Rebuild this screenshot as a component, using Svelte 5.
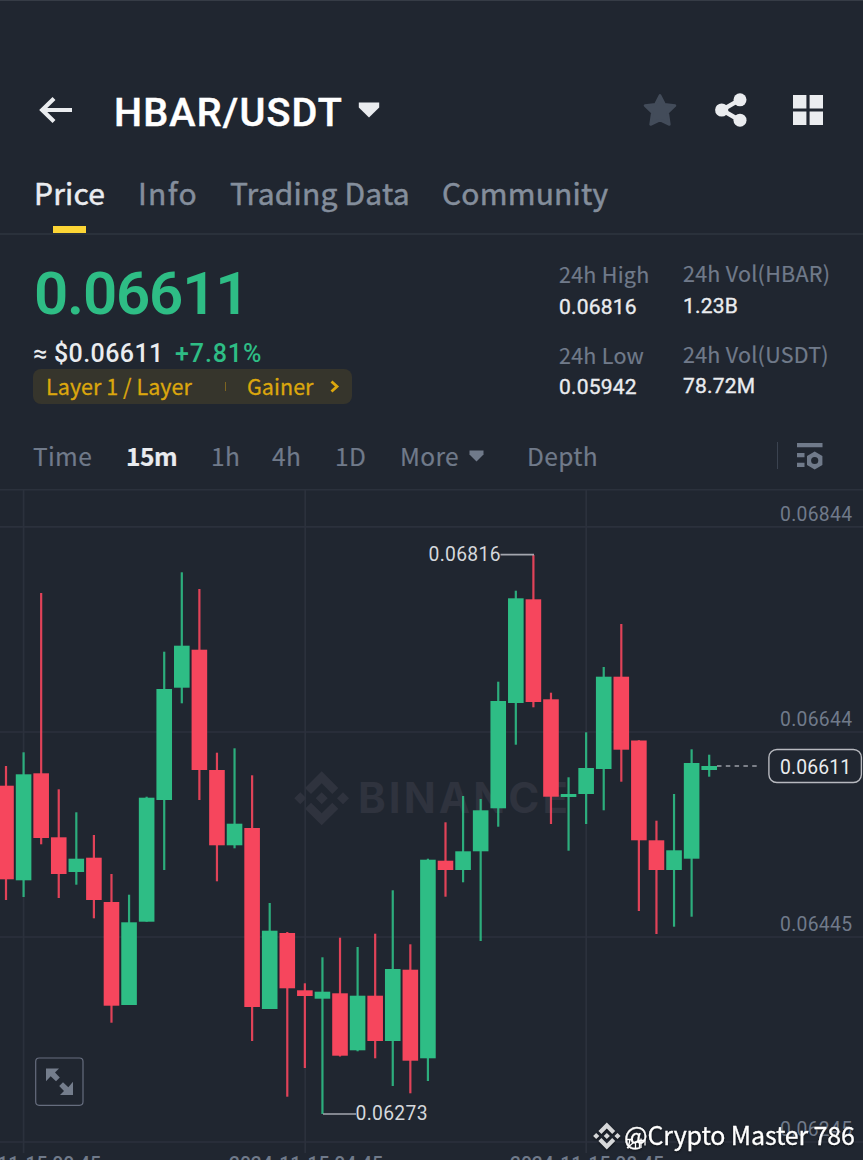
<script>
  const tabs = [
    { label: 'Price', cls: 'price', active: true },
    { label: 'Info', cls: 'info' },
    { label: 'Trading Data', cls: 'trading' },
    { label: 'Community', cls: 'community' }
  ];

  const PITCH = 17.58;
  const FIRST = 6;
  const BODY = 15.6;

  // direction, high, body top, body bottom, low (chart units)
  const candles = [
    ['r', 766, 785.7, 879.3, 900],
    ['g', 752.3, 774.3, 880.3, 897],
    ['r', 593, 773.3, 838, 844.3],
    ['r', 789.3, 837.3, 874, 898],
    ['g', 812.3, 858.7, 872, 884.7],
    ['r', 835, 857.7, 900, 918.3],
    ['r', 874, 902, 1005.7, 1022.7],
    ['g', 894.7, 922.3, 1005, 1005],
    ['g', 796.7, 797.7, 921.7, 921.7],
    ['g', 651.7, 689, 800, 870],
    ['g', 572.3, 645.7, 687.7, 703.3],
    ['r', 589, 649.7, 770, 800],
    ['r', 752.7, 770, 845.3, 881.3],
    ['g', 748.3, 823.7, 845.3, 848.3],
    ['r', 775.3, 828, 1007, 1041],
    ['g', 903, 930.7, 1009, 1009],
    ['r', 932, 933, 988.3, 1096.7],
    ['r', 983.3, 990.3, 996, 1068],
    ['g', 957.3, 991.7, 998.7, 1114],
    ['r', 937.7, 993.3, 1055.7, 1056.5],
    ['g', 947, 995.7, 1050.3, 1051.3],
    ['r', 933.7, 995.7, 1041, 1058.3],
    ['g', 890.3, 969, 1041, 1086],
    ['r', 944.3, 969.7, 1060.7, 1093.3],
    ['g', 858.7, 859.7, 1058.3, 1081],
    ['r', 822.3, 860.7, 870, 896.7],
    ['g', 796, 851.3, 870, 882.3],
    ['g', 799, 810.3, 851.3, 941],
    ['g', 681.7, 701, 808.3, 826.7],
    ['g', 590.7, 598.3, 703, 744.7],
    ['r', 555, 599.3, 702, 707.3],
    ['r', 692.7, 699.3, 796.7, 824],
    ['g', 777.3, 794, 797, 850.7],
    ['g', 732.3, 768, 794, 824],
    ['g', 667, 676.7, 769, 810.3],
    ['r', 624, 676.7, 749.7, 781.7],
    ['r', 740.2, 740.5, 840.3, 911],
    ['r', 820.7, 840.3, 870, 934],
    ['g', 794, 850.3, 870, 926.7],
    ['g', 749.3, 763, 858.7, 916.7],
    ['g', 754.7, 766, 770, 776.7]
  ].map(([dir, high, top, bottom, low], i) => ({ dir, high, top, bottom, low, x: FIRST + i * PITCH }));

  const hLines = [489.7, 526.8, 732, 937, 1142];
  const vLines = [23.6, 305.2, 586.2];
  const axis = [
    ['0.06844', 520.5],
    ['0.06644', 726],
    ['0.06445', 930.7],
    ['0.06245', 1136]
  ];
  const dates = [
    ['2024-11-15 00:45', -53],
    ['2024-11-15 04:45', 229],
    ['2024-11-15 08:45', 510]
  ];
</script>

<div class="screen">
  <header>
    <svg class="back" viewBox="0 0 34 28" width="34" height="28">
      <path d="M15 2.500 3.200 14 15 25.500M4 14h29" fill="none" stroke="#eaecef" stroke-width="4.200" />
    </svg>
    <h1>HBAR/USDT</h1>
    <svg class="caret" viewBox="0 0 22 16" width="22" height="16">
      <path d="M.8.500h20.400v5L11 15.500.8 5.500z" fill="#eaecef" />
    </svg>
    <svg class="star" viewBox="0 0 34 34" width="34" height="34">
      <path d="M17 2.300 21.500 11.200l10.500 1.400-7.300 7 1.700 11.900L17 27l-9.400 4.500 1.700-11.900-7.300-7L12.500 11.200z" fill="#434c5a" stroke="#434c5a" stroke-width="2.600" stroke-linejoin="round" />
    </svg>
    <svg class="share" viewBox="0 0 32 34" width="32" height="34">
      <path d="M25 6.700 7 17l18 10.500" fill="none" stroke="#eaecef" stroke-width="4.400" />
      <circle cx="25" cy="6.800" r="6.500" fill="#eaecef" />
      <circle cx="6.700" cy="17" r="6.600" fill="#eaecef" />
      <circle cx="25" cy="27.200" r="6.500" fill="#eaecef" />
    </svg>
    <svg class="grid" viewBox="0 0 30 30" width="30" height="30">
      <path d="M0 0h13.400v13.400H0zM16.600 0H30v13.400H16.600zM0 16.600h13.400V30H0zM16.600 16.600H30V30H16.600z" fill="#eaecef" />
    </svg>
  </header>

  <nav class="tabs">
    {#each tabs as tab}
      <span class="tab {tab.cls}" class:active={tab.active}>{tab.label}</span>
    {/each}
  </nav>

  <section class="ticker">
    <div class="quote">
      <div class="last">0.06611</div>
      <div class="fiat"><span class="approx">≈</span><span class="usd">$0.06611</span><span class="change">+7.81%</span></div>
      <div class="tag">
        <span class="layer">Layer 1 / Layer</span>
        <i></i>
        <span class="gainer">Gainer</span>
        <svg viewBox="0 0 10 13" width="10" height="13"><path d="M1.500 1.500 7 6.500l-5.500 5" fill="none" stroke="#dca70d" stroke-width="2.800" /></svg>
      </div>
    </div>
    <dl class="left">
      <dt>24h High</dt><dd>0.06816</dd>
      <dt>24h Low</dt><dd>0.05942</dd>
    </dl>
    <dl class="right">
      <dt>24h Vol(HBAR)</dt><dd>1.23B</dd>
      <dt>24h Vol(USDT)</dt><dd>78.72M</dd>
    </dl>
  </section>

  <nav class="intervals">
    <span class="time">Time</span>
    <span class="m15">15m</span>
    <span class="h1">1h</span>
    <span class="h4">4h</span>
    <span class="d1">1D</span>
    <span class="more">More</span>
    <svg class="more-caret" viewBox="0 0 15 12" width="15" height="12"><path d="M.5.500h14v4L7.500 11.500.5 4.500z" fill="#707a8a" /></svg>
    <span class="depth">Depth</span>
    <i></i>
    <svg class="settings" viewBox="0 0 26 28" width="26" height="28">
      <path d="M0 1h25.500v4.200H0zM0 11h7.500v4.200H0zM0 20.800h7.500V25H0z" fill="#707a8a" />
      <path fill-rule="evenodd" d="M17.700 9.500 25.400 14v9l-7.700 4.500L10 23v-9zM17.700 14.900a3.600 3.600 0 1 0 0 7.200 3.600 3.600 0 0 0 0-7.200z" fill="#707a8a" />
    </svg>
  </nav>

  <svg class="chart" viewBox="0 489 863 671" width="863" height="671">
    <g stroke="#2b313c" stroke-width="1.700">
      {#each hLines as y}<path d="M0 {y}H863" />{/each}
      {#each vLines as x}<path d="M{x} 490V1153" />{/each}
    </g>

    <g fill="#2f333e">
      <path d="M321.700 771.300 338.300 788l-6 6-10.600-10.700L311 794l-6-6zM321.700 825.300 305 808.700l6-6 10.700 10.600 10.600-10.600 6 6zM321.700 792.300l6 6-6 6-6-6zM300.300 792.300l6 6-6 6-6-6zM343 792.300l6 6-6 6-6-6z" />
      <text class="brand" x="358" y="813" textLength="210">BINANCE</text>
    </g>

    {#each candles as c}
      <g class={c.dir}>
        <rect class="wick" x={c.x - 1.1} y={c.high} width="2.2" height={c.low - c.high} />
        <rect x={c.x - BODY / 2} y={c.top} width={BODY} height={c.bottom - c.top} />
      </g>
    {/each}

    <path d="M500.500 554.700h33.500M323 1114h33" stroke="#a3a6ae" stroke-width="1.700" />
    <text class="mark" x="428.500" y="560.500" textLength="72">0.06816</text>
    <text class="mark" x="355.500" y="1120" textLength="72">0.06273</text>
    <path d="M717 766h41" stroke="#9a9ea7" stroke-width="1.500" stroke-dasharray="4.500 4.300" />

    {#each axis as [value, y]}<text class="axis" x="780" {y} textLength="72">{value}</text>{/each}
    {#each dates as [value, x]}<text class="date" {x} y="1171" textLength="154">{value}</text>{/each}

    <rect x="768.900" y="749.500" width="92.500" height="33" rx="8" fill="#202630" stroke="#b7b9bf" stroke-width="1.400" />
    <text class="current" x="780" y="774" textLength="71">0.06611</text>

    <g>
      <rect x="35.700" y="1058" width="47.300" height="47.300" rx="3.500" fill="none" stroke="#666d7e" stroke-width="1.200" />
      <path d="M46 1068.500h13l-4 4 4.800 5-3.800 3.800-5.300-5-4.700 5zM73 1095H60l4-4-4.800-5 3.800-3.800 5.300 5 4.700-5.500z" fill="#747d8c" />
    </g>

    <g class="signature">
      <path fill="#d6d7d9" d="M606.800 1122.500 615.200 1131l-3 3-5.400-5.400-5.400 5.400-3-3zM606.800 1149.500 598.400 1141l3-3 5.400 5.400 5.400-5.400 3 3zM606.800 1132.900l3.100 3.100-3.100 3.100-3.100-3.100zM596.200 1132.900l3.100 3.100-3.100 3.100-3.100-3.100zM617.500 1132.900l3.100 3.100-3.100 3.100-3.100-3.100z" />
      <text x="624" y="1145" textLength="231">@Crypto Master 786</text>
      <path class="flourish" d="M627 1139.500h6M630 1139.500l-2 9M627 1148l6-5M635.500 1141.500v7M635.500 1142h4v5M641 1138.500v9.500M638.500 1140.500h6.500v5" />
    </g>
  </svg>
</div>

<style>
  :global(body) {
    margin: 0;
    background: #202630;
  }
  .screen {
    box-sizing: border-box;
    width: 863px;
    height: 1160px;
    overflow: hidden;
    border-top: 1px solid #363c46;
    background: #202630;
    color: #eaecef;
    font-family: "Noto Sans CJK SC", sans-serif;
    white-space: nowrap;
  }
  svg {
    display: block;
    flex: none;
  }

  header {
    display: flex;
    align-items: center;
    height: 70px;
    padding: 74px 39px 0;
  }
  h1 {
    margin: 0 16px 0 41px;
    padding-top: 5px;
    width: 228px;
    font: 500 39.500px/60px Roboto, sans-serif;
    letter-spacing: 1.200px;
    color: #fff;
    -webkit-text-stroke: 0.500px #fff;
  }
  .star {
    margin-left: auto;
  }
  .share {
    margin-left: 38px;
  }
  .grid {
    margin: 0 1px 0 46px;
  }

  .tabs {
    box-sizing: border-box;
    display: flex;
    height: 90px;
    padding: 20px 34px 0;
    border-bottom: 2px solid #2a313b;
    color: #848e9c;
    font-size: 30px;
    line-height: 54px;
    letter-spacing: 0.200px;
    -webkit-text-stroke: 0.500px currentColor;
  }
  .tab {
    display: flex;
    flex-direction: column;
    box-sizing: border-box;
    flex: none;
  }
  .active {
    color: #eaecef;
  }
  .active::after {
    content: "";
    width: 33px;
    height: 7px;
    margin: 7px 0 0 19px;
    background: #fcd535;
  }
  .price { width: 104px; }
  .info { width: 92px; letter-spacing: 1.300px; }
  .trading { width: 212px; }

  .ticker {
    display: flex;
    height: 184px;
    padding-left: 33px;
  }
  .quote {
    width: 526px;
  }
  .last {
    padding-top: 24px;
    padding-left: 1px;
    color: #2ebd85;
    font: 600 60px/70px Roboto, sans-serif;
    letter-spacing: -1.200px;
  }
  .fiat {
    display: flex;
    height: 30px;
    margin-top: 10px;
    font: 500 25px/30px Roboto, sans-serif;
    letter-spacing: 0.400px;
  }
  .approx { width: 21px; }
  .usd { width: 121px; }
  .change { color: #2ebd85; letter-spacing: 0.900px; }
  .tag {
    box-sizing: border-box;
    display: flex;
    align-items: center;
    width: 319px;
    height: 35px;
    margin-top: 0;
    padding-left: 13px;
    border-radius: 8px;
    background: #36352c;
    color: #dca70d;
    font-size: 21.500px;
    line-height: 32px;
    letter-spacing: 0.050px;
    -webkit-text-stroke: 0.300px currentColor;
  }
  .tag span {
    margin-top: -2px;
  }
  .layer { width: 179px; }
  .tag i {
    width: 1px;
    height: 9px;
    background: #7d6420;
  }
  .tag .gainer { width: 83px; margin-left: 21px; }

  dl {
    margin: 0;
    padding-top: 23px;
    width: 124px;
  }
  .right {
    padding-top: 22px;
  }
  dt {
    color: #707a8a;
    font-size: 21.500px;
    line-height: 32px;
    letter-spacing: 0.250px;
    -webkit-text-stroke: 0.200px currentColor;
  }
  dd {
    height: 47px;
    margin: 0;
    padding-top: 1.500px;
    font: 400 21px/31px Roboto, sans-serif;
    letter-spacing: 0.200px;
    -webkit-text-stroke: 0.350px currentColor;
  }

  .intervals {
    display: flex;
    align-items: center;
    height: 70px;
    padding: 0 40px 0 33px;
    color: #707a8a;
    font-size: 24.500px;
    line-height: 36px;
    letter-spacing: 0.350px;
    -webkit-text-stroke: 0.200px currentColor;
  }
  .intervals span { padding-top: 3px; }
  .time { width: 93px; }
  .m15 { width: 85px; color: #eaecef; font-weight: 700; letter-spacing: -0.500px; }
  .h1 { width: 61px; }
  .h4 { width: 63px; }
  .d1 { width: 65px; }
  .more { width: 69px; }
  .depth { margin-left: 43px; }
  .intervals svg { margin-top: 3px; }
  .intervals i {
    width: 1px;
    height: 27px;
    margin: 2px 19px 0 auto;
    background: #3b4350;
  }

  .r { fill: #f6465d; }
  .g { fill: #2ebd85; }
  .wick { opacity: 0.9; }
  .chart text {
    font: 19.300px Roboto, sans-serif;
    letter-spacing: 0;
  }
  .chart .brand {
    font: 700 42px Inter, sans-serif;
  }
  .chart .mark { fill: #d5d8dc; }
  .chart .axis { fill: #707a8a; }
  .chart .date { fill: #707a8a; font-weight: 500; }
  .chart .current { fill: #eaecef; }
  .signature {
    filter: drop-shadow(0 1px 1px #0008);
  }
  .chart .signature text {
    fill: #fff;
    font: 25px "Noto Sans CJK SC", sans-serif;
    stroke: #fff;
    stroke-width: 0.300px;
  }
  .flourish {
    fill: none;
    stroke: #fff;
    stroke-width: 1.300;
  }
</style>
